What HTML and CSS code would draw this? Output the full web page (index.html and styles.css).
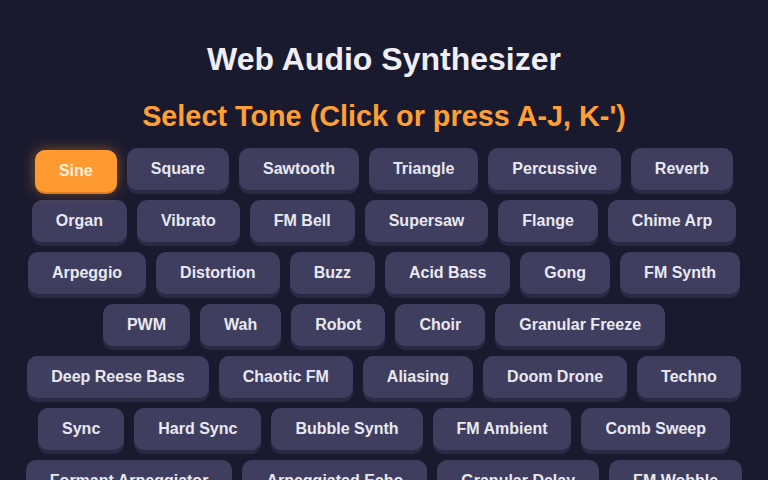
FILE: index.html
```html
<!DOCTYPE html>
<html lang="en">
<head>
<meta charset="utf-8">
<title>Web Audio Synthesizer</title>
<link rel="stylesheet" href="styles.css">
</head>
<body>
<main class="app">
  <h1 class="title">Web Audio Synthesizer</h1>
  <h2 class="subtitle">Select Tone (Click or press A-J, K-')</h2>
  <div class="tones">
    <button class="tone active">Sine</button>
    <button class="tone">Square</button>
    <button class="tone">Sawtooth</button>
    <button class="tone">Triangle</button>
    <button class="tone">Percussive</button>
    <button class="tone">Reverb</button>
    <button class="tone">Organ</button>
    <button class="tone">Vibrato</button>
    <button class="tone">FM Bell</button>
    <button class="tone">Supersaw</button>
    <button class="tone">Flange</button>
    <button class="tone">Chime Arp</button>
    <button class="tone">Arpeggio</button>
    <button class="tone">Distortion</button>
    <button class="tone">Buzz</button>
    <button class="tone">Acid Bass</button>
    <button class="tone">Gong</button>
    <button class="tone">FM Synth</button>
    <button class="tone">PWM</button>
    <button class="tone">Wah</button>
    <button class="tone">Robot</button>
    <button class="tone">Choir</button>
    <button class="tone">Granular Freeze</button>
    <button class="tone">Deep Reese Bass</button>
    <button class="tone">Chaotic FM</button>
    <button class="tone">Aliasing</button>
    <button class="tone">Doom Drone</button>
    <button class="tone">Techno</button>
    <button class="tone">Sync</button>
    <button class="tone">Hard Sync</button>
    <button class="tone">Bubble Synth</button>
    <button class="tone">FM Ambient</button>
    <button class="tone">Comb Sweep</button>
    <button class="tone">Formant Arpeggiator</button>
    <button class="tone">Arpeggiated Echo</button>
    <button class="tone">Granular Delay</button>
    <button class="tone">FM Wobble</button>
  </div>
</main>
</body>
</html>
```

FILE: styles.css
```css
html, body {
  margin: 0;
  padding: 0;
  background: #1a1a2e;
  overflow: hidden;
}

body {
  font-family: "Liberation Sans", Arial, sans-serif;
  color: #eeeef5;
}

.app {
  padding: 41px 20px 20px;
  text-align: center;
}

.title {
  margin: 0 0 22px;
  font-size: 32px;
  font-weight: bold;
  color: #eeeef4;
}

.subtitle {
  margin: 0 0 15px;
  font-size: 28.8px;
  font-weight: bold;
  color: #ff9f35;
}

.tones {
  display: flex;
  flex-wrap: wrap;
  justify-content: center;
  gap: 10px;
}

.tone {
  font-family: inherit;
  font-size: 16px;
  font-weight: bold;
  line-height: 18px;
  padding: 12px 24px;
  border: none;
  border-radius: 10px;
  background: #403e5f;
  color: #e8e8f0;
  box-shadow: 0 4px 0 #2b2a45;
  cursor: pointer;
}

.tone.active {
  background: #ff9a30;
  color: #fff1dd;
  transform: translateY(2px);
  box-shadow: 0 2px 0 #d97d22, 0 0 14px rgba(255, 154, 48, 0.45);
}
```
